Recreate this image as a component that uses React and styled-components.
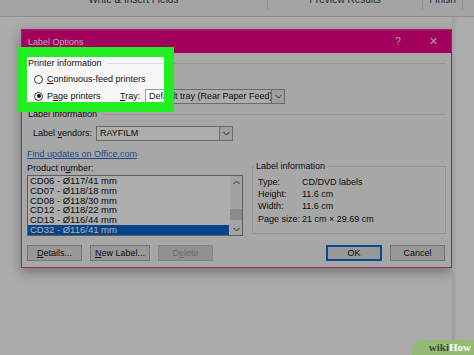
import React from 'react';
import styled, { createGlobalStyle } from 'styled-components';

const Global = createGlobalStyle`
  html, body { margin: 0; padding: 0; background: #adadad; }
  body { font-family: "Liberation Sans", Arial, sans-serif; }
`;

const Stage = styled.div`
  position: relative;
  width: 474px;
  height: 355px;
  overflow: hidden;
  background: #fdfdfd;
  display: flex;
  flex-direction: column;
  font-family: "Liberation Sans", Arial, sans-serif;
  font-size: 9px;
  color: #111;
`;

const Ribbon = styled.div`
  height: 16px;
  flex: none;
  display: flex;
  background: #f2f2f2;
  border-bottom: 1px solid #d2d2d2;
  box-shadow: 0 2px 0 #ffffff;
`;

const RibbonGroup = styled.div`
  width: ${(p) => p.$w}px;
  height: 10px;
  flex: none;
  box-sizing: border-box;
  display: flex;
  justify-content: center;
  border-right: 1px solid #cfcfcf;
  font-size: 10px;
  line-height: 10px;
  color: #3c3c3c;
  overflow: visible;
  & > span { margin-top: -5px; white-space: nowrap; }
`;

const Desk = styled.div`
  flex: 1;
  display: flex;
  padding: 12px 0 0 21px;
`;

const Dialog = styled.div`
  width: 431px;
  height: fit-content;
  box-sizing: border-box;
  border: 1px solid #dc3f9c;
  background: #f7f7f7;
  box-shadow: 0 4px 12px rgba(0, 0, 0, 0.35);
  display: flex;
  flex-direction: column;
`;

const SideStrip = styled.div`
  flex: 1;
  margin-top: -12px;
  background: #ffffff;
  box-shadow: inset 4px 0 6px -4px rgba(0, 0, 0, 0.2);
`;

const TitleBar = styled.div`
  height: 23px;
  background: #ee0088;
  display: flex;
  align-items: center;
  color: #ffffff;
  font-size: 9px;
  padding-left: 6px;
`;

const Title = styled.div`
  flex: 1;
`;

const TitleButton = styled.div`
  width: ${(p) => p.$w}px;
  height: 23px;
  display: flex;
  align-items: center;
  justify-content: center;
  color: #ffe0f0;
  font-size: ${(p) => p.$size}px;
`;

const Body = styled.div`
  padding: 4px 5px 6px 5px;
  display: flex;
  flex-direction: column;
`;

const GroupHeader = styled.div`
  height: 13px;
  line-height: 13px;
  margin-top: ${(p) => p.$mt || 0}px;
  display: flex;
  align-items: center;
  & > span { padding-left: 1px; white-space: nowrap; }
  &::after {
    content: "";
    flex: 1;
    margin-left: 5px;
    border-top: 1px solid #dddddd;
  }
`;

const Row = styled.div`
  height: 16px;
  margin-top: ${(p) => p.$mt || 0}px;
  display: flex;
  align-items: center;
  padding-left: ${(p) => p.$indent || 0}px;
`;

const RadioLabel = styled.label`
  display: flex;
  align-items: center;
  gap: 4px;
  width: ${(p) => (p.$w ? `${p.$w}px` : 'auto')};
  white-space: nowrap;
`;

const RadioCircle = styled.span`
  width: 9px;
  height: 9px;
  box-sizing: border-box;
  border-radius: 50%;
  border: 1px solid #333;
  background: #fff;
  display: flex;
  align-items: center;
  justify-content: center;
  &::after {
    content: "";
    width: 4px;
    height: 4px;
    border-radius: 50%;
    background: ${(p) => (p.$on ? '#111' : 'transparent')};
  }
`;

const FieldLabel = styled.span`
  width: ${(p) => p.$w}px;
  flex: none;
  white-space: nowrap;
`;

const Combo = styled.div`
  width: ${(p) => p.$w}px;
  height: 15px;
  box-sizing: border-box;
  border: 1px solid #9c9c9c;
  background: #ffffff;
  display: flex;
  align-items: stretch;
`;

const ComboText = styled.div`
  flex: 1;
  padding-left: 3px;
  line-height: 13px;
  white-space: nowrap;
  overflow: hidden;
`;

const ComboButton = styled.div`
  width: 12px;
  border-left: 1px solid #9c9c9c;
  background: #ececec;
  display: flex;
  align-items: center;
  justify-content: center;
`;

const Lower = styled.div`
  display: flex;
  align-items: flex-end;
`;

const LeftCol = styled.div`
  width: 217px;
  display: flex;
  flex-direction: column;
`;

const RightCol = styled.div`
  margin-left: 9px;
  margin-bottom: 2px;
  width: 194px;
`;

const Link = styled.a`
  margin-top: 7px;
  height: 13px;
  line-height: 13px;
  color: #2a6fd0;
  text-decoration: underline;
  white-space: nowrap;
`;

const PlainLabel = styled.div`
  margin-top: 1px;
  height: 13px;
  line-height: 13px;
`;

const ListBox = styled.div`
  height: 61px;
  box-sizing: border-box;
  border: 1px solid #8a8a8a;
  background: #ffffff;
  display: flex;
`;

const Items = styled.div`
  flex: 1;
  padding-right: 1px;
`;

const Item = styled.div`
  height: 9.8px;
  line-height: 9.8px;
  font-size: 9.5px;
  padding-left: 2px;
  white-space: nowrap;
  background: ${(p) => (p.$sel ? '#0a66cc' : 'transparent')};
  color: ${(p) => (p.$sel ? '#ffffff' : '#111')};
`;

const Scrollbar = styled.div`
  width: 12px;
  background: #f0f0f0;
  display: flex;
  flex-direction: column;
`;

const ScrollArrow = styled.div`
  height: 12px;
  display: flex;
  align-items: center;
  justify-content: center;
`;

const Track = styled.div`
  flex: 1;
  display: flex;
  flex-direction: column;
  justify-content: flex-end;
`;

const Thumb = styled.div`
  height: 11px;
  margin: 0 0 3px 0;
  background: #cdcdcd;
`;

const InfoGroup = styled.fieldset`
  margin: 0;
  padding: 4px 4px 8px 5px;
  border: 1px solid #dcdcdc;
  min-width: 0;
  box-sizing: border-box;
  width: 194px;
`;

const Legend = styled.legend`
  padding: 0 2px;
  margin-left: -4px;
  font-size: 9px;
  line-height: 11px;
`;

const InfoGrid = styled.div`
  display: grid;
  grid-template-columns: 44px auto;
  grid-auto-rows: 12.3px;
  line-height: 12.3px;
  white-space: nowrap;
`;

const ButtonRow = styled.div`
  margin-top: 9px;
  display: flex;
  gap: 8px;
  padding-right: 1px;
`;

const Spacer = styled.div`
  flex: 1;
`;

const Btn = styled.div`
  width: ${(p) => p.$w}px;
  height: 16px;
  box-sizing: border-box;
  display: flex;
  align-items: center;
  justify-content: center;
  background: ${(p) => (p.$disabled ? '#d6d6d6' : '#e1e1e1')};
  border: 1px solid ${(p) => (p.$primary ? '#0a6fd4' : p.$disabled ? '#c6c6c6' : '#adadad')};
  box-shadow: ${(p) => (p.$primary ? 'inset 0 0 0 1px #0a6fd4' : 'none')};
  color: ${(p) => (p.$disabled ? '#9c9c9c' : '#111')};
  white-space: nowrap;
`;

const U = styled.span`
  text-decoration: underline;
`;

const Spotlight = styled.div`
  position: absolute;
  left: 17px;
  top: 47px;
  width: 157px;
  height: 65px;
  box-sizing: border-box;
  border: 10px solid #22ef22;
  box-shadow: 0 0 0 800px rgba(0, 0, 0, 0.32);
  pointer-events: none;
`;

const Badge = styled.div`
  position: absolute;
  right: 0;
  bottom: 0;
  width: 62px;
  height: 15px;
  background: #93bb73;
  border-top-left-radius: 10px 15px;
  display: flex;
  align-items: center;
  justify-content: flex-end;
  padding-right: 3px;
  box-sizing: border-box;
  font-family: "Liberation Serif", "Times New Roman", serif;
  font-weight: bold;
  font-size: 11px;
  line-height: 15px;
`;

const Wiki = styled.span`
  color: #3d4a35;
`;

const How = styled.span`
  color: #ffffff;
`;

const Chevron = ({ up }) => (
  <svg width="7" height="5" viewBox="0 0 7 5">
    <path
      d={up ? 'M0.5 4 L3.5 1 L6.5 4' : 'M0.5 1 L3.5 4 L6.5 1'}
      fill="none"
      stroke="#444"
      strokeWidth="1"
    />
  </svg>
);

const products = [
  'CD06 - Ø117/41 mm',
  'CD07 - Ø118/18 mm',
  'CD08 - Ø118/30 mm',
  'CD12 - Ø118/22 mm',
  'CD13 - Ø116/44 mm',
  'CD32 - Ø116/41 mm',
];

const info = [
  ['Type:', 'CD/DVD labels'],
  ['Height:', '11.6 cm'],
  ['Width:', '11.6 cm'],
  ['Page size:', '21 cm × 29.69 cm'],
];

export default function App() {
  return (
    <Stage>
      <Global />
      <Ribbon>
        <RibbonGroup $w={268}><span>Write &amp; Insert Fields</span></RibbonGroup>
        <RibbonGroup $w={155}><span>Preview Results</span></RibbonGroup>
        <RibbonGroup $w={40}><span>Finish</span></RibbonGroup>
      </Ribbon>
      <Desk>
        <Dialog>
          <TitleBar>
            <Title>Label Options</Title>
            <TitleButton $w={34} $size={10}>?</TitleButton>
            <TitleButton $w={36} $size={11}>✕</TitleButton>
          </TitleBar>
          <Body>
            <GroupHeader><span>Printer information</span></GroupHeader>
            <Row $mt={1} $indent={7}>
              <RadioLabel>
                <RadioCircle />
                <span><U>C</U>ontinuous-feed printers</span>
              </RadioLabel>
            </Row>
            <Row $mt={1} $indent={7}>
              <RadioLabel $w={86}>
                <RadioCircle $on />
                <span>P<U>a</U>ge printers</span>
              </RadioLabel>
              <FieldLabel $w={25}><U>T</U>ray:</FieldLabel>
              <Combo $w={140}>
                <ComboText>Default tray (Rear Paper Feed)</ComboText>
                <ComboButton><Chevron /></ComboButton>
              </Combo>
            </Row>
            <GroupHeader $mt={4}><span>Label information</span></GroupHeader>
            <Row $mt={4} $indent={6}>
              <FieldLabel $w={63}>Label <U>v</U>endors:</FieldLabel>
              <Combo $w={137}>
                <ComboText>RAYFILM</ComboText>
                <ComboButton><Chevron /></ComboButton>
              </Combo>
            </Row>
            <Lower>
              <LeftCol>
                <Link>Find updates on Office.com</Link>
                <PlainLabel>Product n<U>u</U>mber:</PlainLabel>
                <ListBox>
                  <Items>
                    {products.map((p, i) => (
                      <Item key={p} $sel={i === products.length - 1}>{p}</Item>
                    ))}
                  </Items>
                  <Scrollbar>
                    <ScrollArrow><Chevron up /></ScrollArrow>
                    <Track><Thumb /></Track>
                    <ScrollArrow><Chevron /></ScrollArrow>
                  </Scrollbar>
                </ListBox>
              </LeftCol>
              <RightCol>
                <InfoGroup>
                  <Legend>Label information</Legend>
                  <InfoGrid>
                    {info.map(([k, v]) => (
                      <React.Fragment key={k}>
                        <span>{k}</span>
                        <span>{v}</span>
                      </React.Fragment>
                    ))}
                  </InfoGrid>
                </InfoGroup>
              </RightCol>
            </Lower>
            <ButtonRow>
              <Btn $w={55}><span><U>D</U>etails...</span></Btn>
              <Btn $w={60}><span><U>N</U>ew Label...</span></Btn>
              <Btn $w={55} $disabled>D<U>e</U>lete</Btn>
              <Spacer />
              <Btn $w={56} $primary>OK</Btn>
              <Btn $w={55}>Cancel</Btn>
            </ButtonRow>
          </Body>
        </Dialog>
        <SideStrip />
      </Desk>
      <Spotlight />
      <Badge><Wiki>wiki</Wiki><How>How</How></Badge>
    </Stage>
  );
}
